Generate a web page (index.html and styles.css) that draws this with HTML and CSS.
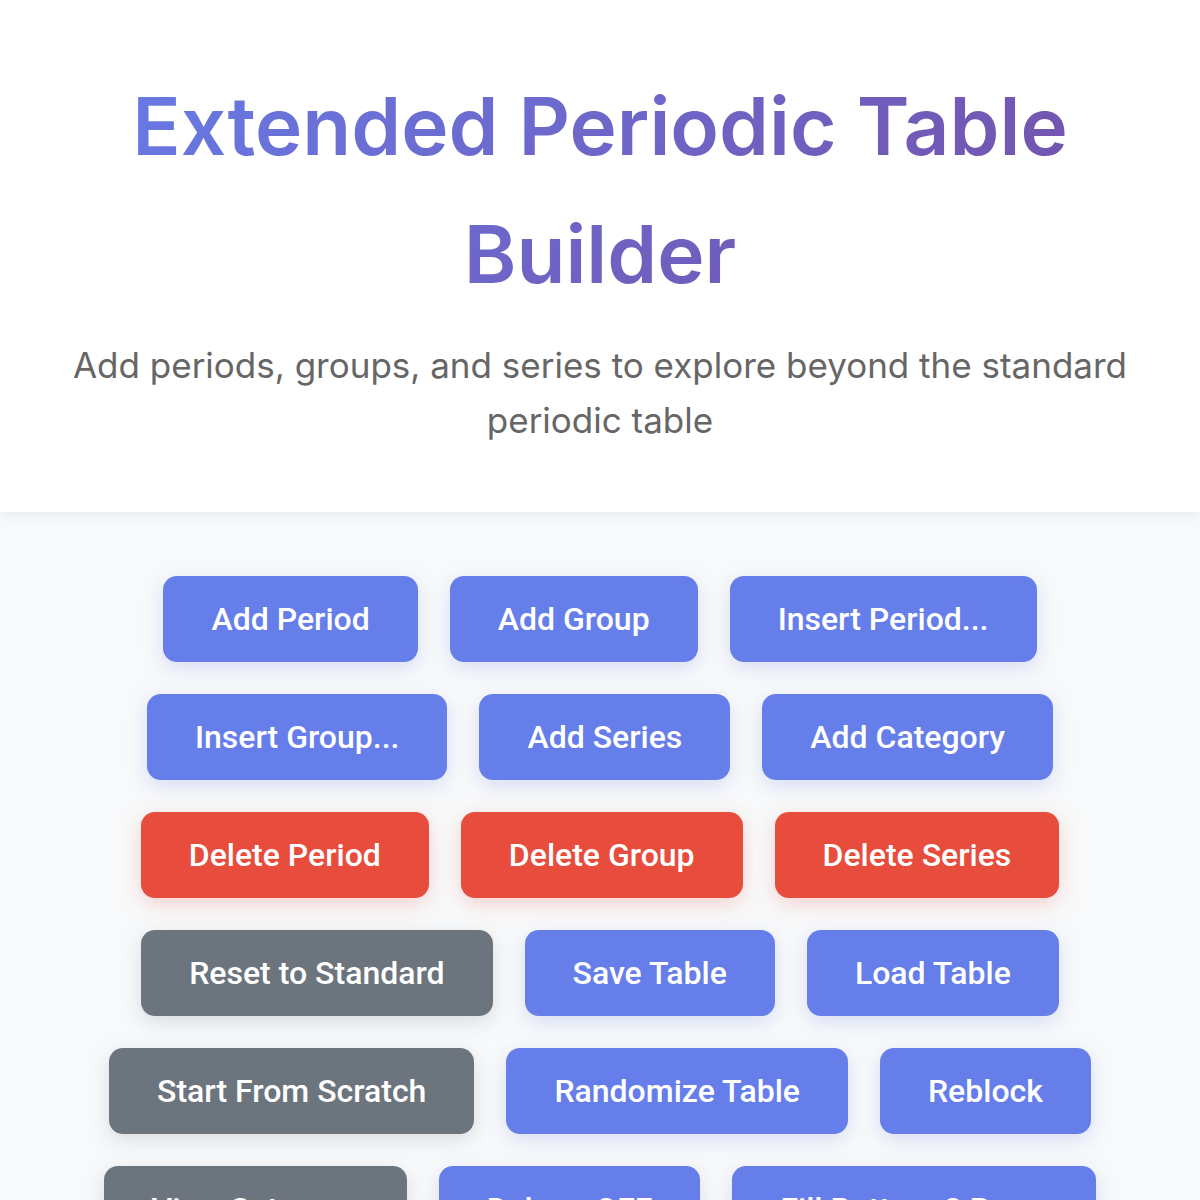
FILE: index.html
```html
<!DOCTYPE html>
<html lang="en">
<head>
    <meta charset="UTF-8">
    <meta name="viewport" content="width=device-width, initial-scale=1.0">
    <title>Extended Periodic Table Builder</title>
    <link rel="stylesheet" href="styles.css">
</head>
<body>
    <!-- Header -->
    <header class="header">
        <h1 class="title">Extended Periodic Table Builder</h1>
        <p class="subtitle">Add periods, groups, and series to explore beyond the standard periodic table</p>
    </header>

    <!-- Controls -->
    <main class="controls">
        <button class="btn">Add Period</button>
        <button class="btn">Add Group</button>
        <button class="btn">Insert Period...</button>
        <button class="btn">Insert Group...</button>
        <button class="btn">Add Series</button>
        <button class="btn">Add Category</button>
        <button class="btn btn-danger">Delete Period</button>
        <button class="btn btn-danger">Delete Group</button>
        <button class="btn btn-danger">Delete Series</button>
        <button class="btn btn-secondary">Reset to Standard</button>
        <button class="btn">Save Table</button>
        <button class="btn">Load Table</button>
        <button class="btn btn-secondary">Start From Scratch</button>
        <button class="btn">Randomize Table</button>
        <button class="btn">Reblock</button>
        <button class="btn btn-secondary">View Category</button>
        <button class="btn">Debug: OFF</button>
        <button class="btn">Fill Bottom 2 Rows</button>
    </main>
</body>
</html>
```

FILE: styles.css
```css
* {
    box-sizing: border-box;
}
body {
    margin: 0;
    font-family: Inter, "Noto Sans", sans-serif;
    background-color: #f8f9fa;
}
.header {
    background: #fff;
    text-align: center;
    padding: 62px 40px 64px;
    box-shadow: 0 2px 12px rgba(0, 0, 0, 0.08);
    position: relative;
}
.title {
    margin: 0 0 20px;
    font-size: 80px;
    font-weight: 600;
    line-height: 128px;
    background: linear-gradient(135deg, #667eea 0%, #764ba2 100%);
    -webkit-background-clip: text;
    background-clip: text;
    color: transparent;
}
.subtitle {
    margin: 0;
    font-size: 35px;
    line-height: 55px;
    color: #666;
}
.controls {
    display: flex;
    flex-wrap: wrap;
    justify-content: center;
    gap: 32px;
    padding: 64px 100px;
}
.btn {
    font-family: Roboto, Arial, sans-serif;
    font-size: 32px;
    font-weight: 500;
    line-height: 38px;
    padding: 24px 48px;
    border: none;
    border-radius: 14px;
    color: #fff;
    background-color: #667eea;
    box-shadow: 0 6px 20px rgba(102, 126, 234, 0.22);
    cursor: pointer;
}
.btn-danger {
    background-color: #e74c3c;
    box-shadow: 0 6px 20px rgba(231, 76, 60, 0.22);
}
.btn-secondary {
    background-color: #6c757d;
    box-shadow: 0 6px 20px rgba(108, 117, 125, 0.22);
}
```
